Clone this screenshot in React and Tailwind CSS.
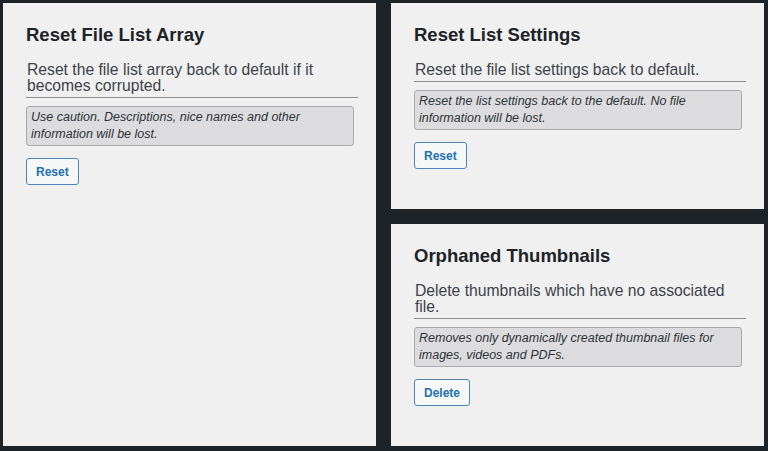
const panels = {
  left: {
    title: 'Reset File List Array',
    desc: 'Reset the file list array back to default if it becomes corrupted.',
    note: 'Use caution. Descriptions, nice names and other information will be lost.',
    action: 'Reset',
  },
  settings: {
    title: 'Reset List Settings',
    desc: 'Reset the file list settings back to default.',
    note: 'Reset the list settings back to the default. No file information will be lost.',
    action: 'Reset',
  },
  thumbs: {
    title: 'Orphaned Thumbnails',
    desc: 'Delete thumbnails which have no associated file.',
    note: 'Removes only dynamically created thumbnail files for images, videos and PDFs.',
    action: 'Delete',
  },
};

function Panel({ title, desc, note, action, className = '' }) {
  return (
    <section className={`bg-[#f0f0f1] pt-[20px] pl-[23px] pr-[18px] pb-[40px] ${className}`}>
      <h2 className="text-[18.5px] leading-[24px] font-bold text-[#1d2327]">{title}</h2>
      <p className="mt-[15px] pl-[1px] pb-[3px] border-b border-[#8c8f94] text-[15.7px] leading-[16px] text-[#3c434a]">
        {desc}
      </p>
      <div className="mt-[8px] mr-[4px] rounded-[3px] border border-[#a7aaad] bg-[#dcdcde] pl-[4px] pr-[4px] py-[2px] text-[12.5px] leading-[17px] italic text-[#2c3338]">
        {note}
      </div>
      <button
        type="button"
        className="mt-[12px] h-[27px] rounded-[3px] border border-[#4a86bd] bg-[#f6f7f7] px-[9px] text-[12px] font-bold text-[#2271b1]"
      >
        {action}
      </button>
    </section>
  );
}

export default function App() {
  return (
    <div
      className="h-[451px] w-[768px] overflow-hidden bg-[#1d2327] pt-[3px] pl-[3px]"
      style={{ fontFamily: '"Liberation Sans", Arial, sans-serif' }}
    >
      <div className="grid grid-cols-[373px_373px] gap-x-[15px]">
        <Panel {...panels.left} />
        <div className="flex flex-col gap-[15px]">
          <Panel {...panels.settings} />
          <Panel {...panels.thumbs} />
        </div>
      </div>
    </div>
  );
}
